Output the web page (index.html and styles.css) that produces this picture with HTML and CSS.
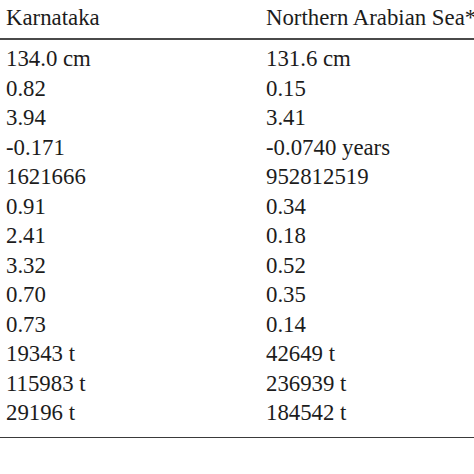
FILE: index.html
```html
<!DOCTYPE html>
<html>
<head>
<meta charset="utf-8">
<link rel="stylesheet" href="styles.css">
</head>
<body>
<div class="table">
  <div class="head">
    <div class="c1">Karnataka</div>
    <div class="c2">Northern Arabian Sea*</div>
  </div>
  <div class="body">
    <div class="c1">134.0 cm</div><div class="c2">131.6 cm</div>
    <div class="c1">0.82</div><div class="c2">0.15</div>
    <div class="c1">3.94</div><div class="c2">3.41</div>
    <div class="c1">-0.171</div><div class="c2">-0.0740 years</div>
    <div class="c1">1621666</div><div class="c2">952812519</div>
    <div class="c1">0.91</div><div class="c2">0.34</div>
    <div class="c1">2.41</div><div class="c2">0.18</div>
    <div class="c1">3.32</div><div class="c2">0.52</div>
    <div class="c1">0.70</div><div class="c2">0.35</div>
    <div class="c1">0.73</div><div class="c2">0.14</div>
    <div class="c1">19343 t</div><div class="c2">42649 t</div>
    <div class="c1">115983 t</div><div class="c2">236939 t</div>
    <div class="c1">29196 t</div><div class="c2">184542 t</div>
  </div>
</div>
</body>
</html>
```
FILE: styles.css
```css
html, body {
  margin: 0;
  padding: 0;
  background: #fff;
}
body {
  width: 474px;
  height: 474px;
  overflow: hidden;
  font-family: "Liberation Serif", "Times New Roman", serif;
  font-size: 24px;
  line-height: 29.5px;
  color: #1c1c1c;
}
.table {
  width: 499px;
  transform: scaleX(0.95);
  transform-origin: 0 0;
}
.head, .body {
  display: grid;
  grid-template-columns: 273.7px 1fr;
  padding-left: 6.3px;
  white-space: nowrap;
}
.head {
  padding-top: 3.15px;
  padding-bottom: 5.35px;
  border-bottom: 2px solid #4a4a4a;
}
.body {
  padding-top: 4.15px;
  padding-bottom: 9.35px;
  border-bottom: 1.5px solid #3a3a3a;
}
```
